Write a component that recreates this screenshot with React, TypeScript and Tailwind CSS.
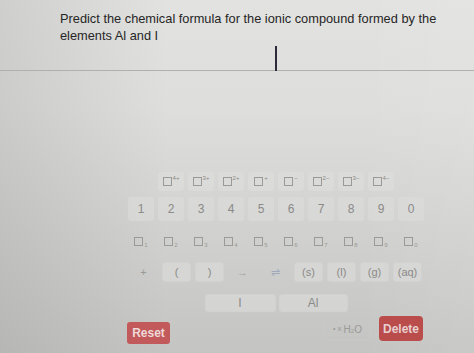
import React from "react";

const Box = ({ size = 9 }: { size?: number }) => (
  <span
    className="inline-block border border-[#9a9a98] bg-transparent"
    style={{ width: size, height: size }}
  />
);

const Key = ({ children, className = "" }: { children: React.ReactNode; className?: string }) => (
  <div
    className={
      "flex items-center justify-center rounded-[3px] border border-[#d2d2d0] bg-[#dcdcda]/60 text-[#8a8a88] " +
      className
    }
  >
    {children}
  </div>
);

export default function App() {
  const charges = ["4+", "3+", "2+", "+", "−", "2−", "3−", "4−"];
  const digits = ["1", "2", "3", "4", "5", "6", "7", "8", "9", "0"];
  const subs = ["1", "2", "3", "4", "5", "6", "7", "8", "9", "0"];
  return (
    <div
      className="relative h-[353px] w-[474px] overflow-hidden bg-[linear-gradient(180deg,#e2e2e0_0%,#dededc_30%,#d3d3d1_60%,#c4c4c2_100%)] font-['Liberation_Sans',Arial,sans-serif]"
    >
      <div className="absolute inset-0 bg-[linear-gradient(90deg,rgba(120,120,118,0.18)_0%,rgba(0,0,0,0)_35%,rgba(0,0,0,0)_75%,rgba(255,255,255,0.08)_100%)]" />
      <div className="relative">
        <div className="pl-[60px] pt-[10px] text-[12.8px] leading-[17px] text-[#262626]">
          <div>Predict the chemical formula for the ionic compound formed by the</div>
          <div>elements Al and I</div>
        </div>
        <div className="relative h-[27px] border-b border-[#b0b0ae]">
          <div className="absolute left-[275px] top-[2px] h-[25px] w-[2px] bg-[#2c2c3a]" />
        </div>

        <div className="ml-[128px] mt-[101px] flex w-[296px] flex-col">
          {/* charges */}
          <div className="flex h-[19px] justify-center gap-[4px]">
            {charges.map((c, i) => (
              <Key key={i} className="w-[26px] border-transparent bg-[#e0e0de]/50">
                <span className="flex items-start">
                  <Box />
                  <span className="ml-[1px] -mt-[2px] text-[6px] leading-none text-[#8a8a88]">{c}</span>
                </span>
              </Key>
            ))}
          </div>
          {/* digits */}
          <div className="mt-[6px] flex h-[24px] gap-[4px]">
            {digits.map((d) => (
              <Key key={d} className="w-[26px] border-transparent bg-[#d8d8d6]/70 text-[12px]">
                {d}
              </Key>
            ))}
          </div>
          {/* subscripts */}
          <div className="mt-[10px] flex h-[20px] gap-[4px]">
            {subs.map((s, i) => (
              <Key key={i} className="w-[26px] border-transparent bg-transparent">
                <span className="flex items-end">
                  <Box />
                  <span className="ml-[1px] -mb-[2px] text-[6px] leading-none text-[#9a9a98]">{s}</span>
                </span>
              </Key>
            ))}
          </div>
          {/* symbols */}
          <div className="mt-[11px] flex h-[20px] gap-[4px] pl-[1px] text-[11px]">
            <div className="flex w-[29px] items-center justify-center text-[#9a9a98]">+</div>
            <Key className="w-[29px] border-[#c4c8c4]">(</Key>
            <Key className="w-[29px] border-[#c4c8c4]">)</Key>
            <div className="flex w-[29px] items-center justify-center text-[#a4a4a2]">→</div>
            <div className="flex w-[29px] items-center justify-center text-[#a0a8bc]">⇌</div>
            <Key className="w-[29px] border-[#c4c8c4]">(s)</Key>
            <Key className="w-[29px] border-[#c4c8c4]">(l)</Key>
            <Key className="w-[29px] border-[#c4c8c4]">(g)</Key>
            <Key className="w-[29px] border-[#c4c8c4]">(aq)</Key>
          </div>
          {/* elements */}
          <div className="mt-[12px] flex h-[18px] justify-center gap-[3px] text-[12px]">
            <Key className="w-[71px] border-[#d0d0ce] bg-[#d2d2d0]/60">I</Key>
            <Key className="w-[69px] border-[#d0d0ce] bg-[#d2d2d0]/60">Al</Key>
          </div>
          {/* bottom */}
          <div className="mt-[4px] flex h-[30px] items-start">
            <button className="-ml-[1px] mt-[6px] h-[22px] w-[43px] rounded-[3px] bg-[#c25a5b] text-[12px] font-bold text-[#efd8d8]">
              Reset
            </button>
            <div className="ml-[154px] mt-[1px] flex h-[24px] w-[47px] items-center justify-center rounded-[3px] border border-[#c8c8c6] text-[10px] text-[#9a9a98]">
              <span className="mr-[2px] text-[7px]">•</span>
              <span className="text-[8px]">x</span>
              <span className="ml-[2px]">H</span>
              <span className="mt-[4px] text-[6px]">2</span>
              <span>O</span>
            </div>
            <button className="ml-[8px] h-[25px] w-[44px] rounded-[4px] bg-[#ba4d4c] text-[12px] font-bold text-[#e8cfcf]">
              Delete
            </button>
          </div>
        </div>
      </div>
    </div>
  );
}
